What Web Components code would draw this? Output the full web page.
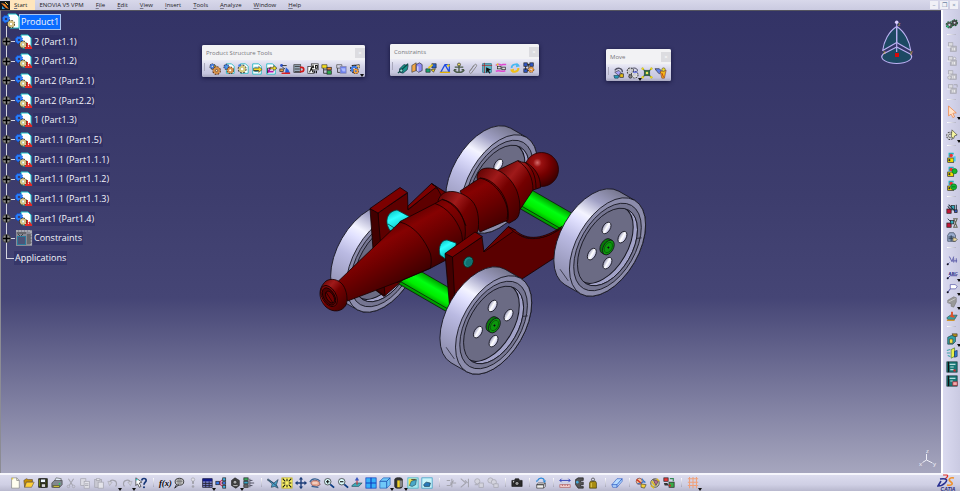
<!DOCTYPE html>
<html lang="en">
<head>
<meta charset="utf-8">
<title>Product1</title>
<style>
html, body { height: 100%; margin: 0; }
body { font-family: "Open Sans", "Noto Sans", sans-serif; overflow: hidden; }
</style>
</head>
<body>
<cad-app></cad-app>
<script>
const gear = (x, y, r, c, s = '#222') =>
  `<circle cx="${x}" cy="${y}" r="${r}" fill="none" stroke="${s}" stroke-width="${r * 0.9}" stroke-dasharray="${r * 0.5} ${r * 0.28}"/><circle cx="${x}" cy="${y}" r="${r * 0.8}" fill="none" stroke="${c}" stroke-width="${r * 0.7}"/>`;
const page = (x, y, w, h, c = '#1cb5c0') =>
  `<path d="M${x} ${y}h${w - 3}l3 3v${h - 3}h-${w}z" fill="#fff" stroke="${c}"/>`;
const ln = (d, c = '#222', w = 1) => `<path d="${d}" fill="none" stroke="${c}" stroke-width="${w}"/>`;
const fl = (d, c, s = 'none') => `<path d="${d}" fill="${c}" stroke="${s}" stroke-width=".7"/>`;
const box = (x, y, w, h, c, s = '#222') => `<rect x="${x}" y="${y}" width="${w}" height="${h}" fill="${c}" stroke="${s}" stroke-width=".8"/>`;
const dot = (x, y, r, c, s = 'none') => `<circle cx="${x}" cy="${y}" r="${r}" fill="${c}" stroke="${s}" stroke-width=".8"/>`;
const grey = '#a3a3ad';
const ghost = extra => box(3, 2, 5, 4, '#dcdce0', grey) + box(5, 6, 7, 6, '#bdbdc4', grey) + ln('M1 7h5M8 8v3M10 8v3', '#f4f4f4') + extra;
const lens = sign => dot(5.5, 5.5, 3.8, '#dff', '#222') + ln('M8.5 8.5l4.5 4', '#0a3a80', 2) + ln(sign, '#111', 1.3);
const trafficBox = extra => box(2, 7, 7, 5, '#f2e000') + dot(4, 9.5, 1.2, '#333') + ln('M4 6V2h5', '#1cb5c0', 2) + dot(6, 4, 2, '#e33') + extra;

const ICONS = {
  comp: gear(4, 4, 2.4, '#3c7be8') + dot(7, 4, 1.4, '#e8d860', '#444') + gear(8.8, 8.8, 3.5, '#d8924a', '#5b2b08') + dot(8.8, 8.8, 1.3, '#f4e8c0', '#5b2b08'),
  prod: page(4, 1, 9, 11) + gear(4, 4.5, 2.4, '#3c7be8') + gear(8.5, 8.5, 3, '#d8924a', '#5b2b08'),
  part: page(4, 1, 9, 11) + gear(6, 7, 3.6, '#d8cc7c', '#444') + dot(3, 3, 1.5, '#3c7be8'),
  exist: page(2, 1, 10, 12) + ln('M4 5h4M4 10h4', '#1cb5c0') + fl('M3 6h6V4l4 3.5L9 11V9H3z', '#f4dc20', '#333') + ln('M3 9h6', '#222'),
  existpos: page(2, 1, 10, 12) + ln('M3 11l4-6M4 10h6', '#b018b0', 2) + fl('M6 5h4V3l4 3-4 3V7H6z', '#f4dc20', '#333') + ln('M3 12V6h3', '#222'),
  replace: dot(3, 3, 1.7, '#2a50c8') + ln('M4 3h5M4 5l3 2', '#222') + box(1, 7, 4, 3, '#f0a648') + fl('M8 5l3 3 2 4H7z', '#2860d8') + ln('M3 12h10', '#d22', 1.6),
  reorder: box(1, 2, 8, 9, '#9ab', '#333') + ln('M2 4h6M2 7h6M2 10h6', '#333') + ln('M8 5h2a2.5 2.5 0 010 5H8', '#d01818', 2),
  number: box(1, 4, 7, 8, '#fff') + box(5, 1, 8, 7, '#fff') + ln('M6 6l1-3 1 3M10 3v3h2V3zM3 11l2-5 2 5M9 9v3M11 9v3', '#111', 1.2),
  load: fl('M1 2h6v4H1z', '#f4dc20', '#333') + ln('M3 6v6h5M3 8h5', '#333') + box(7, 5, 5, 3, '#f0882c') + box(7, 9, 5, 4, '#2fae50'),
  unload: ln('M2 2h6v4H2z', '#666') + ln('M3 6v5h4', '#333') + box(6, 4, 7, 8, '#6d80ea', '#88a') + fl('M7 6h5v4H9z', '#aab8ff'),
  multi: gear(6, 7, 3.4, '#3c7be8') + gear(8, 9.5, 2.4, '#f0a040', '#6b3b10') + ln('M4 3l8-1v4', '#333') + dot(11, 4, 1.4, '#e8c070'),
  coinc: fl('M3 8l5-5 5 1-1 5-5 4-4-1z', '#19948c', '#123') + ln('M1 13L13 2', '#0a4a46', 1.4) + dot(5, 10, 1.8, '#8ee0d0', '#123'),
  contact: fl('M1 4l5-3v9l-5 2z', '#f0a648', '#333') + fl('M6 3l4-2 3 2v7l-4 2-3-2z', '#8e8cf4', '#222') + ln('M8 5v6', '#fff'),
  offset: fl('M1 8h5v4H1z', '#19a06c', '#222') + fl('M8 2h5v5H8z', '#2a62c8', '#222') + ln('M4 7l5-4', '#e8c820', 2) + fl('M7 9l5-1-2 4z', '#f0d020', '#222'),
  angle: ln('M2 12L7 3h5v9zM7 3l5 9', '#1d4ae0', 1.5) + ln('M1 12h12', '#e0b000', 1.5) + dot(11, 4, 1.5, '#e8d020'),
  fix: dot(7, 3, 1.8, '#e8d860', '#333') + ln('M7 4v8M2 6h10M1 9c1 4 11 4 12 0M1 9h3M10 9h3', '#4a5a48', 1.6),
  fixtog: ln('M3 11l6-8c1-1 3 0 2 2l-6 8c-1 1-3-1-2-2l5-7', '#888', 1.1),
  quick: box(2, 2, 10, 10, '#5fb8c8', '#1c6f86') + ln('M1 4h12M4 1v12', '#b02020', .8) + fl('M6 6l6 3-3 1 2 3-1 .7-2-3-2 2z', '#111'),
  flex: ln('M1 4c3-4 5 1 8-1h4M1 11c4-3 6 2 11-1', '#e048d0', 1.8) + box(3, 5, 4, 3, '#ddd') + box(8, 6, 4, 3, '#ddd') + dot(3, 3, 1.2, '#e8d020'),
  change: ln('M3 7c0-5 6-5 8-3', '#48b8f0', 2) + ln('M11 7c0 5-6 5-8 3', '#f0c018', 2.2) + fl('M9 1l4 4-5 1z', '#48b8f0') + fl('M5 13L1 9l5-1z', '#f0c018'),
  reuse: box(1, 1, 4, 4, '#3158c8') + box(8, 1, 4, 4, '#3158c8') + box(1, 8, 4, 4, '#3158c8') + ln('M5 3h3M3 5v4M6 2l2 9M5 10h4', '#222') + gear(9.5, 9, 2.5, '#f0a040', '#6b3b10'),
  manip: ln('M2 4c3-4 9-3 9 2', '#556', 1.6) + fl('M2 6l5-2 4 5-3 2z', '#a8a0f4', '#333') + box(8, 8, 4, 4, '#e8c018') + fl('M1 10h6l-1 3H2z', '#28a0c0', '#134'),
  snap: gear(4, 5, 3, '#ccc') + gear(9, 9, 3, '#ddd') + ln('M5 2c4-2 8 0 7 3', '#334', 1) + dot(4, 11, 2, '#888', '#222') + ln('M7 6h5', '#5060e0', 1.5),
  explode: fl('M4 4h6v6H4z', '#2c7440', '#222') + ln('M1 1l4 4M13 1L9 5M1 13l4-4M13 13L9 9', '#28603c', 1.2) + dot(2, 2, 1.4, '#e8d020') + dot(12, 2, 1.4, '#e8d020') + dot(2, 12, 1.4, '#e8d020') + dot(12, 12, 1.4, '#e8d020') + dot(7, 7, 1.5, '#f0e060'),
  clash: fl('M0 2h5l3 3-3 3-3-3z', '#6080e8', '#222') + fl('M6 5l7-1-1 4-1 5H8z', '#f4b818', '#733') + dot(10, 3, 2, '#e8e030', '#654') + ln('M8 7l2 5', '#c03010'),
  fresh: fl('M3 1h6l3 3v9H3z', '#fffef0', '#777') + ln('M9 1v3h3', '#777', .8) + dot(4, 2, 1, '#e8d040'),
  open: fl('M1 4l3-2 2 1h5v3H4l-2 6z', '#c89000', '#543') + fl('M4 6h9l-3 6H2z', '#ffd038', '#654'),
  save: box(2, 2, 10, 10, '#333a10', '#111') + box(4, 2.4, 6, 4, '#eef8ff', '#111') + box(5, 8, 5, 4, '#d8d8d8', '#111') + ln('M2.8 3v8', '#8c9c18', 1),
  print: fl('M4 5l2-4 6 1-1 4z', '#e8f4ff', '#444') + fl('M1 7l3-3h9v5l-3 3H1z', '#828890', '#333') + fl('M2 10h8v2H3z', '#e8d838', '#333') + dot(10, 8, 1, '#2c6'),
  cut: ln('M4 2l5 8M10 2L5 10', grey, 1.2) + dot(4, 11, 1.5, 'none', grey) + dot(10, 11, 1.5, 'none', grey),
  copy: box(2, 2, 6, 8, '#dcdce4', grey) + box(6, 5, 6, 8, '#e4e4ea', grey) + ln('M7 8h4M7 10h4', grey),
  paste: box(2, 3, 8, 9, '#c8c8d2', grey) + box(4, 2, 4, 2, '#e4e4ea', grey) + box(6, 6, 6, 7, '#e4e4ea', grey),
  undo: ln('M3 7c1-5 9-4 8 2l-1 2', grey, 1.4) + fl('M1 5l2 5 3-4z', '#d4d4dc', grey),
  redo: ln('M11 7c-1-5-9-4-8 2l1 2', grey, 1.4) + fl('M13 5l-2 5-3-4z', '#d4d4dc', grey),
  whats: fl('M1 1l7 5-3 1 2 4-2 1-2-4-2 2z', '#fff', '#111') + ln('M8 4c0-3 5-3 5 0 0 2-2.500 2-2.500 5', '#183878', 2) + dot(10.5, 12, 1.2, '#183878') + dot(2, 3, 1, '#2cc'),
  fx: `<text x="0" y="11" font-family="Liberation Serif, serif" font-style="italic" font-weight="bold" font-size="10">f(x)</text>`,
  url: `<ellipse cx="7.500" cy="5.500" rx="5" ry="4" fill="#ccc" stroke="#222"/>` + ln('M4 9l-2 4 5-4', '#222') + ln('M4 5h7M5 7h5M5 3.500h5', '#444', .8),
  check: ln('M7 2v6', grey, 2.4) + dot(7, 11, 1.5, grey) + dot(7, 3, 2, '#e2e2ea', grey),
  table: box(2, 2, 11, 10, '#7880c8', '#112') + `<rect x="2" y="2" width="11" height="3" fill="#101888"/>` + ln('M2 7.500h11M2 10h11M5.500 5v7M9.500 5v7', '#223', 1),
  relate: ln('M4 7l5-4M4 7h6M4 7l5 4', '#c03060', 1.2) + box(1, 5, 4, 4, '#3878e8') + box(9, 1, 3.500, 3.500, '#40b0e0') + box(9, 5.500, 3.500, 3, '#3878e8') + box(9, 10, 3.500, 3, '#40b0e0'),
  knowledge: fl('M3 4l4-3 5 3v6l-4 3-5-3z', '#444', '#111') + dot(7, 6, 2.300, '#aaa', '#111') + ln('M5 10h5', '#ccc'),
  catalog: box(1, 1, 5, 3, '#38a858') + box(1, 5, 5, 3, '#38a8c8') + box(1, 9, 5, 3, '#666') + ln('M8 2v10M8 4h3M8 7h5M8 10h3', '#445'),
  fly: fl('M0 3l5 2 3 2 5-4-2 6 2 4-4-2-4 1 1-4z', '#48a0c8', '#234') + ln('M1 2l11 9', '#246'),
  fitall: box(1, 1, 12, 12, '#f8f068', '#c0b020') + ln('M2 2l3 3M12 2L9 5M2 12l3-3M12 12L9 9M7 2v3M7 9v3M2 7h3M9 7h3', '#111', 1.2),
  pan: ln('M7 1v12M1 7h12', '#1c3c78', 1.6) + fl('M7 0l2.500 3h-5zM7 14l2.500-3h-5zM0 7l3-2.500v5zM14 7l-3-2.500v5z', '#1c3c78'),
  rotate: fl('M2 7c1-4 8-4 10-1l1 3-4 2-5-1z', '#e8a890', '#634') + ln('M1 6c2-5 9-5 12-1M3 11l8 1', '#346090', 1.4) + ln('M4 7h6', '#fff', 1),
  zoomin: lens('M3.500 5.500h4M5.500 3.500v4'),
  zoomout: lens('M3.500 5.500h4'),
  normal: fl('M1 10l4-3h8l-4 4H1z', '#3cacb8', '#245') + ln('M7 9V2', '#c04040', 1.4) + fl('M7 0l2.500 4h-5z', '#3858c0'),
  multiview: box(1, 1, 12, 12, '#38b0f8', '#113cbc') + ln('M7 1v12M1 7h12', '#113cbc', 1.3),
  iso: fl('M1 5l4-4h8v8l-4 4H1z', '#70c8f8', '#1850b0') + ln('M1 5h8v8M9 5l4-4', '#1850b0', 1),
  shade: fl('M2 3c0-3 9-3 9 0v8c0 3-9 3-9 0z', '#333', '#111') + fl('M5 4h3v8H5z', '#f0d028') + fl('M8 4h3v7l-3 1z', '#888'),
  hide: box(1, 1, 12, 12, '#a8e8f0', '#38b0c0') + fl('M2 2h9L2 11z', '#f0e048') + fl('M3 10l2-5 6-2-1 6-4 2z', '#48a8c8', '#245') + ln('M5 3h5', '#333'),
  swap: box(1, 1, 12, 12, '#c8f4fa', '#2898c0') + fl('M3 9l3-3 5 1-1 4H4z', '#2878b8', '#134'),
  g1: ln('M2 4h4M2 10h4M8 2v10M6 7h7M10 4l-4 6', grey, 1.2),
  g2: ln('M2 2l6 5-6 5M11 2v10M7 4l3 3', grey, 1.2),
  g3: dot(5, 5, 3, '#d4d4de', grey) + box(7, 7, 5, 5, '#d4d4de', grey) + ln('M2 9h4', grey),
  g4: dot(4, 4, 3, '#d4d4de', grey) + dot(8, 6, 3, '#d4d4de', grey) + box(8, 8, 5, 4, '#d4d4de', grey),
  camera: fl('M1 4h3l1-2h4l1 2h3v7H1z', '#2b2b2b', '#111') + dot(7, 7.500, 2.400, '#999', '#000') + dot(3, 5.500, .8, '#ddd'),
  refresh: fl('M2 9h8v4H2zM2 9l2-2h8l-2 2zM12 7v4l-2 2', '#eee', '#222') + ln('M3 4c2-4 7-3 8 0', '#2888d8', 1.5) + fl('M9 4h4l-2 3z', '#2888d8') + fl('M1 4h3L2 6z', '#2888d8'),
  measure: ln('M1 4h12M3 2L1 4l2 2M11 2l2 2-2 2', '#3040b8', 1.1) + box(1, 9, 12, 3, '#f4d0d0', '#b06060') + ln('M4 9v1.500M7 9v1.500M10 9v1.500', '#933', .7),
  caliper: fl('M3 3l3-2h6v3H9v2h3v3H9v2h3v2H6L3 9z', '#555', '#111') + dot(5, 6, 1.500, '#4ad'),
  inertia: fl('M4 5h6l1 2v6H3V7z', '#a88c10', '#332c00') + dot(7, 3, 1.800, 'none', '#333') + ln('M5 7v5', '#e8d060'),
  eraser: fl('M1 9l6-7h6v3l-6 7H2z', '#b8dcff', '#2050c0') + ln('M1 9h6l6-7M7 9v3', '#2050c0', .9),
  render1: dot(5, 5, 3.6, '#f0c8a0', '#733') + ln('M3 8l9-3M8 2l4 5', '#3878c8', 1.3) + ln('M2 3l5 4', '#d83820', 1.8) + fl('M7 8l6 1-2 4-4-1z', '#f4d038', '#333'),
  render2: dot(7, 7, 5, '#c8c8a8', '#333') + fl('M5 3l6 2-3 5z', '#b86890', '#333') + ln('M2 10l4 3M3 5l4 5M9 2l3 3', '#e0b818', 1.600),
  render3: box(1, 1, 5, 4, '#e83838') + box(7, 6, 6, 6, '#38a848') + fl('M1 7h4l2 3H2z', '#333') + ln('M8 2h4v3', '#385', 1.400) + dot(8, 10, 1.3, '#d82020'),
  gridsnap: ln('M1 2h12M1 6h12M1 10h12M3 0v13M7 0v13M11 0v13', '#f0a078', 1.200),
  wb: gear(4, 8, 3, '#555', '#163') + gear(10, 5.500, 2.800, '#444', '#163') + dot(2, 10, 1.300, '#2ec080'),
  gh1: ghost(''), gh2: ghost(dot(10, 4, 1.500, '#eee', grey)), gh3: ghost(dot(4, 10, 2, '#ddd', grey)), gh4: ghost(ln('M9 2h4v3', grey)),
  select: fl('M3 0l9 8-4 .500 2 4-2 1-2-4-3 2z', '#ffe4cc', '#f07020'),
  gearcur: gear(5, 8, 3.300, '#ccc', '#444') + dot(5, 8, 2, '#e8e8f0', '#555') + fl('M7 1l6 6-3 1-1 3-3-2z', '#f4f4a0', '#333'),
  t1: trafficBox(ln('M10 5v6', '#48c8e8', 2.400)),
  t2: trafficBox(dot(10, 6, 3, '#18b828', '#163')),
  t3: trafficBox(dot(9, 8, 3.500, '#18b828', '#163') + ln('M7 8h4', '#063')),
  c1: box(1, 7, 5, 5, '#c01838') + box(6, 3, 4, 5, '#38b0c0') + ln('M3 2l9 9M12 2v9M2 4l3 3', '#234', 1.200) + box(10, 8, 3, 3, '#3858c0'),
  c2: box(1, 7, 5, 5, '#c01838') + box(5, 4, 4, 4, '#38b0c0') + ln('M9 2h4l-2 5 2 5H9l2-5z', '#665', 1.200) + ln('M2 2l4 4', '#234'),
  c3: fl('M2 5l2-3h5l2 3v7H2z', '#9ac', '#234') + ln('M3 7h6M3 9h6M6 5v7', '#234') + fl('M8 8h3l2 2-2 2H8z', '#e8d8a0', '#333'),
  weld: ln('M2 12l2-2M4 3l3 6 2-6M9 8h4M9 5v5M12 5v5', '#5454a4', 1) + dot(2, 12, 1.2, '#112'),
  abc: `<text x="3" y="8" font-family="Liberation Sans, sans-serif" font-weight="bold" font-size="5" fill="#2c2c88">ABC</text>` + ln('M2 12l3-3h8', '#3c3c98', 1) + dot(2, 12, 1.2, '#112'),
  flag: fl('M5 3h6l2 2.500L11 8H5z', '#fff', '#3c3c98') + ln('M5 8l-3 4', '#3c3c98') + dot(2, 12, 1.2, '#112'),
  leaf: fl('M2 5l7-4 3 1v5l-3 6-3-1v-3l-4-1z', '#999', '#777') + ln('M3 7l8-4', '#ccc'),
  stamp: fl('M1 9l4-3h8l-3 5H2z', '#38a0a8', '#244') + ln('M7 8V2M5 7l5 1', '#e05028', 2.200) + ln('M1 12h9', '#d09020', 1.500),
  cube1: fl('M2 5l4-2h5v7l-3 3H2z', '#30a0a8', '#133') + fl('M4 7h4v5H4z', '#f0e048', '#333') + fl('M7 1h6v3H9z', '#b89018', '#333'),
  cube2: fl('M6 3l4-2v10l-4 2z', '#e8f048', '#363') + fl('M10 5l3-1v7l-3 1z', '#3080d8', '#124') + ln('M1 4l4-1M1 7l4 0M2 10l3 1', '#38a0a8', 1.300),
  cat1: box(1, 1, 12, 12, '#187878', '#133') + ln('M4 4h7M5 7h4M5 10h4', '#b8dede', 1.300) + ln('M3 1v12', '#111', 1.500) + dot(10, 11, 1.500, '#c03030'),
  cat2: box(1, 1, 12, 12, '#187878', '#133') + ln('M4 4h7M5 7h3', '#b8dede', 1.300) + ln('M3 1v12', '#111', 1.500) + box(8, 8, 5, 4, '#f0b0b0', '#c02030')
};

const TREE_ICONS = {
  product: `<path d="M6 0h8l3 3v11H8z" fill="#fff" stroke="#22c4cc"/>${gear(4, 5, 2.8, '#2a7cf4', '#0a50e0')}${gear(9, 10, 2.800, '#d8c484', '#443a18')}`,
  part: `<path d="M6 1h7l3 3v10H7z" fill="#fff" stroke="#22c4cc"/><path d="M12 9v5M10 14h7M14 11l2 3" stroke="#e02828" stroke-width="2"/>${gear(4, 6, 2.8, '#2a7cf4', '#0a50e0')}${gear(8, 10.500, 2.700, '#d8c484', '#443a18')}`,
  constraints: `<rect x="1" width="16" height="16" fill="#8a8a96"/><path d="M1 1h15v14" fill="none" stroke="#c4c4cc" stroke-dasharray="2 1"/><path d="M2 3h9M13 4v10M15 4v10M3 4l2 2M8 4l-2 2" fill="none" stroke="#444"/><rect x="2.500" y="6.500" width="8" height="8" fill="#4c5478" stroke="#2c7c9c"/>`
};

function define(name, html, setup) {
  const template = document.createElement('template');
  template.innerHTML = html;
  customElements.define(name, class extends HTMLElement {
    connectedCallback() {
      if (this.shadowRoot) return;
      this.attachShadow({ mode: 'open' }).append(template.content.cloneNode(true));
      if (setup) setup.call(this, this.shadowRoot);
    }
  });
}

define('tool-button', `
<style>
:host { display: block; position: relative; width: 14px; height: 14px; flex: none; }
button { display: block; width: 100%; height: 100%; padding: 1px; border: 0; background: none; }
button:hover { background: #ffe8c0; }
svg { display: block; width: 12px; height: 12px; overflow: visible; }
i { display: none; position: absolute; right: -2px; bottom: -1px; border: 2px solid transparent; border-top: 3px solid #111; border-bottom: 0; }
:host([menu]) i { display: block; }
</style><button type="button"></button><i></i>`, function (root) {
  const b = root.querySelector('button');
  b.setAttribute('aria-label', this.getAttribute('icon'));
  b.innerHTML = `<svg viewBox="0 0 14 14" aria-hidden="true">${ICONS[this.getAttribute('icon')]}</svg>`;
});

define('tool-bar', `
<style>
:host { display: block; }
nav { display: flex; align-items: center; }
hr { flex: none; margin: 0; border: 0; width: 10px; height: 10px; box-sizing: border-box; background: linear-gradient(#fff, #a8a8bc) 5px 0 / 1px 9px no-repeat; }
:host([vertical]) nav { flex-direction: column; }
:host([vertical]) hr { height: 9px; background: linear-gradient(90deg, #fff, #b4b4c8) 0 3px / 9px 1px no-repeat; }
</style><nav></nav>`, function (root) {
  const nav = root.querySelector('nav');
  for (const item of this.getAttribute('items').split(' ')) {
    if (item === '|') { nav.append(document.createElement('hr')); continue; }
    const b = document.createElement('tool-button');
    b.setAttribute('icon', item.replace('+', ''));
    if (item.endsWith('+')) b.setAttribute('menu', '');
    nav.append(b);
  }
});

define('tool-window', `
<style>
:host { position: absolute; border-radius: 2px; overflow: hidden; background: #d4d4e8; box-shadow: 0 1px 4px #15153a; }
header { display: flex; align-items: center; justify-content: space-between; height: 15px; padding: 0 0 0 4px; background: #f2f2f4; color: #77777c; font-size: 6px; line-height: 14px; }
button { width: 10px; height: 10px; padding: 0; border: 0; background: #dcdce0; color: #fff; font: 6px/10px "Open Sans", sans-serif; }
section { display: flex; height: 17px; align-items: center; padding: 0 3px 0 6px; background: linear-gradient(#ececf6, #d2d2e8 40%, #c6c6de 80%, #a8a8c0); position: relative; }
section::before { content: ""; position: absolute; left: 2px; top: 3px; width: 1px; height: 8px; background: #aaaabc; }
</style><header><span></span><button type="button" aria-label="Close">×</button></header><section><slot></slot></section>`, function (root) {
  root.querySelector('span').textContent = this.getAttribute('heading');
});

define('menu-bar', `
<style>
:host { display: flex; align-items: center; justify-content: space-between; height: 10px; background: linear-gradient(#d8d8ea, #cacae0); color: #1c1c24; font-size: 6px; line-height: 10px; }
nav { display: flex; align-items: center; }
.app { width: 10px; height: 9px; display: block; }
button { border: 0; margin: 0; padding: 0 6px; background: none; font: inherit; color: inherit; line-height: 10px; white-space: nowrap; }
button.on { background: #ffe6bd; padding: 0 8px 0 4px; }
button.enovia { padding-left: 4px; }
u { text-underline-offset: 1px; text-decoration-thickness: 1px; text-decoration-color: #77778a; }
.win { gap: 2px; padding-right: 2px; }
.win button { width: 8px; padding: 0; background: #f0f0f6; color: #6c84a4; line-height: 8px; height: 8px; }
</style>
<nav aria-label="Menu"><svg class="app" viewBox="0 0 10 9"><path fill="#101820" d="M0 0h10v9H0z"/><path d="M1 2l4 1 4 5-3-1z" fill="#f08028"/><path d="M2 5l3 3H2z" fill="#38a0e0"/><path d="M5 1l3 3" stroke="#f8d040"/></svg>
<button class="on"><u>S</u>tart</button><button class="enovia">ENOVIA V5 VPM</button><button><u>F</u>ile</button><button><u>E</u>dit</button><button><u>V</u>iew</button><button><u>I</u>nsert</button><button><u>T</u>ools</button><button><u>A</u>nalyze</button><button><u>W</u>indow</button><button><u>H</u>elp</button></nav>
<nav class="win"><button aria-label="Minimize">–</button><button aria-label="Restore">❐</button><button aria-label="Close">×</button></nav>`);

define('tree-node', `
<style>
:host { display: flex; align-items: center; position: relative; padding-left: 1px; color: #f4f4fa; font-size: 9px; line-height: 14px; white-space: nowrap; }
:host::before { content: ""; position: absolute; left: 5px; top: 0; bottom: 0; width: 1px; background: #d4d4de; }
:host([kind=product])::before { top: 14px; }
:host([kind=none])::before { bottom: 50%; }
.arm { width: 4px; height: 1px; background: #d4d4de; }
:host([kind=none]) .arm { margin-left: 4px; width: 8px; }
button { position: relative; width: 9px; height: 9px; padding: 0; border: 0; background: none; }
button svg { display: block; width: 9px; height: 9px; }
.icon { width: 17px; height: 16px; overflow: visible; margin-right: 1px; flex: none; position: relative; }
:host([kind=product]) button, :host([kind=product]) .arm, :host([kind=none]) button, :host([kind=none]) .icon { display: none; }
span { padding: 0 1px; background: #2a2a6080; }
:host([kind=product]) span { background: #0a6cff; outline: 1px solid #a8c4f0; }
</style><button type="button" aria-label="Expand"><svg viewBox="0 0 9 9"><circle cx="4.500" cy="4.500" r="4" fill="#8c8c8c" stroke="#444"/><path d="M4.500 1v7M1 4.500h7" stroke="#000" stroke-width="1.500"/></svg></button><i class="arm"></i><svg class="icon" viewBox="0 0 17 16"></svg><span><slot></slot></span>`, function (root) {
  root.querySelector('.icon').innerHTML = TREE_ICONS[this.getAttribute('kind')] || '';
});

define('spec-tree', `
<style>
:host { position: absolute; left: 0; top: 1px; display: grid; grid-auto-rows: 1fr; height: 256px; }
</style><slot></slot>`);

/* A wheel is drawn in its own frame: x runs along the axle, y across it. */
const wheel = (x, y, hub = true) => `
<g transform="translate(${x} ${y}) rotate(30)" stroke="#15151f" stroke-width=".8">
 <path d="M0-54H-18A31 54 0 0 0-18 54H0A31 54 0 0 0 0-54z" fill="url(#tire)"/>
 <ellipse rx="31" ry="54" fill="#8c8cab"/>
 <ellipse rx="27.500" ry="48" fill="#757591"/>
 <g clip-path="url(#rim)"><ellipse rx="24.500" ry="42.500" fill="#a2a2c8"/><ellipse cx="-5" rx="24.500" ry="42.500" fill="#6b6b84" stroke-width="1"/></g>
 <ellipse rx="24.500" ry="42.500" fill="none"/>
 <path d="M-30 43l13 6M21 -22l4 -3" fill="none" stroke-width=".6"/>
 ${[[-10.400, -16], [8, -16], [-10, 14], [8, 14]].map(([a, b]) => `<ellipse cx="${a}" cy="${b}" rx="3.700" ry="6.300" fill="url(#hole)"/>`).join('')}
 ${hub ? '<path d="M1-8h-3a5 8 0 0 0 0 16h3z" fill="#087808"/><ellipse cx="1" rx="5" ry="8" fill="#0c960c"/><ellipse cx="1" rx="3.500" ry="5.600" fill="none" stroke="#064806" stroke-width=".6"/><circle cx="1" r=".7" fill="#000"/>' : ''}
</g>`;

define('cannon-model', `
<style>
:host { position: absolute; left: 309px; top: 109px; width: 340px; height: 270px; }
svg { display: block; width: 100%; height: 100%; }
</style>
<svg viewBox="310 120 340 270" role="img" aria-label="Cannon assembly">
<defs>
 <linearGradient id="tire" gradientUnits="userSpaceOnUse" x1="0" y1="-54" x2="0" y2="54"><stop offset="0" stop-color="#77778f"/><stop offset=".18" stop-color="#a0a0c4"/><stop offset=".34" stop-color="#f4f4ff"/><stop offset=".42" stop-color="#e2e2ff"/><stop offset=".6" stop-color="#babae2"/><stop offset="1" stop-color="#8888a8"/></linearGradient>
 <linearGradient id="hole"><stop offset="0" stop-color="#9898ba"/><stop offset=".5" stop-color="#fff"/><stop offset="1" stop-color="#c4c4ea"/></linearGradient>
 <clipPath id="rim"><ellipse rx="24.500" ry="42.500"/></clipPath>
 <linearGradient id="axle" gradientUnits="userSpaceOnUse" x1="0" y1="-11" x2="0" y2="11"><stop offset="0" stop-color="#00a000"/><stop offset=".35" stop-color="#00ff10"/><stop offset=".65" stop-color="#00ee00"/><stop offset="1" stop-color="#008a00"/></linearGradient>
 <linearGradient id="barrel" gradientUnits="userSpaceOnUse" x1="408" y1="212" x2="440" y2="268"><stop offset="0" stop-color="#5c0000"/><stop offset=".22" stop-color="#860202"/><stop offset=".5" stop-color="#6c0000"/><stop offset="1" stop-color="#380000"/></linearGradient>
 <linearGradient id="ring" x1="0" y1="0" x2="1" y2="1"><stop offset="0" stop-color="#560000"/><stop offset=".3" stop-color="#a01a1a"/><stop offset=".5" stop-color="#740000"/><stop offset="1" stop-color="#3c0000"/></linearGradient>
 <radialGradient id="ball" cx=".38" cy=".3" r=".7"><stop offset="0" stop-color="#d46a6a"/><stop offset=".18" stop-color="#981010"/><stop offset=".55" stop-color="#740000"/><stop offset="1" stop-color="#3c0000"/></radialGradient>
 <linearGradient id="peg" x1="0" y1="0" x2=".5" y2="1"><stop offset="0" stop-color="#00b8b8"/><stop offset=".4" stop-color="#30ffff"/><stop offset="1" stop-color="#00b0b0"/></linearGradient>
</defs>
${wheel(384.300, 263, false)}${wheel(499.300, 184, false)}
<g stroke="#0a1a0a" stroke-width=".7">
 <g transform="translate(499.300 184) rotate(30)"><path d="M20-11H100V11H20z" fill="url(#axle)"/><path d="M20 8H100" /></g>
 <g transform="translate(384.300 263) rotate(30)"><path d="M-2-11H90V11H-2z" fill="url(#axle)"/><path d="M0 8H90"/></g>
</g>
<g stroke="#100" stroke-width=".8" stroke-linejoin="round">
 <path d="M378 213l29.500-20 .5 17 27-22.500 13 7 0 40-50 50-14 12-8-6z" fill="#5e0000"/>
 <path d="M370 208.500l8 4.500 7 83-9-6z" fill="#420000"/>
 <path d="M370 208.500l30-21 7.500 5-29.500 20.500z" fill="#7c0000"/>
 <path d="M408 206l23.500-22.500 5 3.500-28.500 22.500z" fill="#7c0000"/>
 <path d="M431.500 183.500l16 10-5 4-6-10.500z" fill="#6c0000"/>
 <path d="M397 210l14 7.500-3 16-18-3c-6-9-3-19 7-20.500z" fill="url(#peg)" stroke="#044"/>
 <path d="M388 224l8 5" stroke="#044"/>
 <circle cx="541.500" cy="169.500" r="17" fill="url(#ball)" stroke="#200"/>
 <path d="M498 170l20-9.500 3.500 1.500 4 .5c10 5 15 14 15 25l-7.500 2.500-12 18-6 7-14-5z" fill="url(#ring)"/>
 <path d="M518 161c10 6 15 17 15 29M525 162.500c7 5 11 13 11 26" fill="none"/>
 <path d="M477 178c0-5 3-9 8-9.700 12-2 26 8 32 23 4 11 4 24-1 28l-7 4-18-12z" fill="url(#ring)"/>
 <path d="M460 191l20-13c14 0 31 20 28 42l-28 12z" fill="url(#barrel)"/>
 <path d="M480 178c13 3 22 15 26 26 2 6 2 11 1 15" fill="none"/>
 <path d="M438 201c2-7 7-10 15-9.500 9 1 17 6 21 12 5 8 5 19 4 28l-22 20z" fill="url(#ring)"/>
 <path d="M400 221.500l35-18 7-4c12 2 20 12 23 26 1 8 0 14-2 22l-16 12-17 9-33 14-20-20z" fill="url(#barrel)"/>
 <path d="M338 281.500l62-59.500c15 4 25 18 30.500 32 1 5 1 9 0 14l-33 14-50 19z" fill="url(#barrel)"/>
 <path d="M435 203.500c12 4 21 15 26 28 2 8 2 14 0 20M442 199c13 5 20 15 24 27" fill="none"/>
 <path d="M326 281c5-3 12-2 17 4 4 6 5 15 3 20-4 7-13 8-20 2-7-7-9-18 0-26z" fill="url(#ring)"/>
 <ellipse cx="329" cy="296" rx="7" ry="11.500" transform="rotate(-30 329 296)" fill="#7c0808"/>
 <ellipse cx="329" cy="296.500" rx="5.500" ry="9.500" transform="rotate(-30 329 296.500)" fill="#4c0000"/>
 <ellipse cx="330" cy="297" rx="3.600" ry="6.500" transform="rotate(-30 330 297)" fill="#6e0000"/>
 <path d="M326 292l7 11" fill="none"/>
 <path d="M447 240l9 3v12l-9 5-7-5c-2-8 1-15 7-15z" fill="url(#peg)" stroke="#044"/>
 <path d="M452 257l30-20 2 15 24.500-25 8 5c8 10 27 9 47-5v25l-40 26-70 30z" fill="#5a0000"/>
 <path d="M445 253.500l7.500 3.500 2 38-5 10z" fill="#420000"/>
 <path d="M445 253.500l30-21.500 7.500 4.500-30 20.500z" fill="#780000"/>
 <path d="M483.500 251.500l24.800-25 7 3.500-30 21z" fill="#6c0000"/>
 <path d="M508.300 226.700l7 3.500c12 11 28 9 47-4-16 15-38 17-54 .5z" fill="#7c0000"/>
 <ellipse cx="468.300" cy="262" rx="4.500" ry="5.500" transform="rotate(30 468.300 262)" fill="#1c8c8c" stroke="#032"/>
 <ellipse cx="469" cy="262.300" rx="3" ry="4" transform="rotate(30 469 262.300)" fill="#107070" stroke="none"/>
</g>
${wheel(607.500, 247)}${wheel(493.600, 325)}
</svg>`);

define('view-compass', `
<style>
:host { position: absolute; right: 27px; top: 7px; width: 34px; height: 48px; }
svg { display: block; }
text { font: 5px "Open Sans", sans-serif; fill: #d8b830; }
</style>
<svg width="34" height="48" viewBox="880 18 34 48" role="img" aria-label="Compass">
<g stroke="#bdb2f4" stroke-width="1.100" fill="#1d4963" stroke-linejoin="round">
<path d="M896.700 26.500c-8 5-13 15-14 24l14-8z"/><path d="M896.700 26.500c8 5 13 15 14 24l-14-8z"/>
<path d="M896.700 47l-13.500 7c-5 5 4 9.500 13.500 9.500s18.500-4.500 13.500-9.500z"/>
<path d="M896.700 22v30" fill="none"/></g>
<circle cx="896.700" cy="22.300" r="1.800" fill="#ddd0ff"/><path d="M895 53h4v4h-4z" fill="#d80808"/>
<text x="898" y="26">z</text><text x="883" y="54">x</text><text x="910" y="54">y</text></svg>`);

define('axis-triad', `
<style>
:host { position: absolute; right: 3px; bottom: 3px; width: 20px; height: 24px; }
svg { display: block; }
text { font: 6px "Open Sans", sans-serif; fill: #f4f4fa; }
</style>
<svg width="20" height="24" viewBox="918 446 20 24" role="img" aria-label="Axes"><path d="M926.500 454v6l-4 2.500M926.500 460l6 3" fill="none" stroke="#f0f0f8"/><text x="926" y="453">z</text><text x="919" y="466">x</text><text x="933" y="466">y</text></svg>`);

define('brand-mark', `
<style>
:host { display: flex; flex-direction: column; align-items: center; width: 22px; height: 18px; }
svg { display: block; width: 22px; height: 13px; }
span { font: italic bold 5px/5px "Liberation Sans", sans-serif; color: #28287c; }
</style>
<svg viewBox="0 0 22 13" aria-hidden="true"><path d="M6 1h4c2 1-1 3-2 4" fill="none" stroke="#e03028" stroke-width="1.200"/><path d="M3 5c7-1 8 1 5 4-2 2-5 3-7 3l3-5" fill="none" stroke="#283090" stroke-width="1.600"/><path d="M17 4c-5-1-6 2-3 4s0 4-4 3" fill="none" stroke="#f09028" stroke-width="1.600"/></svg><span>CATIA</span>`);

define('cad-app', `
<style>
:host { display: grid; grid-template: auto 1fr 18px / 1fr 19px; height: 100vh; overflow: hidden; background: #d0d0e6; }
menu-bar { grid-column: 1 / -1; }
main { position: relative; overflow: hidden; border-top: 1px solid #55555f; border-left: 1px solid #8c8c94; background: linear-gradient(#333366, #3d3d6d 40%, #454575 62%, #6e6e94 78%, #a6a6be); }
aside { border-left: 2px solid #fff; background: linear-gradient(90deg, #dadaf0, #cacae2); padding: 7px 0 0 1px; }
footer { display: flex; align-items: center; padding-left: 8px; border-top: 2px solid #f6f6fc; background: linear-gradient(#dcdcee, #cfcfe4 60%, #b8b8ce); grid-column: 1 / -1; grid-row: 3; box-sizing: border-box; }
footer brand-mark { margin-left: auto; margin-right: 1px; }
.structure { left: 201px; top: 34px; }
.constraints { left: 389px; top: 33px; }
.move { left: 605px; top: 38px; }
</style>
<menu-bar></menu-bar>
<main>
<spec-tree>
<tree-node kind="product">Product1</tree-node>
<tree-node kind="part">2 (Part1.1)</tree-node>
<tree-node kind="part">2 (Part1.2)</tree-node>
<tree-node kind="part">Part2 (Part2.1)</tree-node>
<tree-node kind="part">Part2 (Part2.2)</tree-node>
<tree-node kind="part">1 (Part1.3)</tree-node>
<tree-node kind="part">Part1.1 (Part1.5)</tree-node>
<tree-node kind="part">Part1.1 (Part1.1.1)</tree-node>
<tree-node kind="part">Part1.1 (Part1.1.2)</tree-node>
<tree-node kind="part">Part1.1 (Part1.1.3)</tree-node>
<tree-node kind="part">Part1 (Part1.4)</tree-node>
<tree-node kind="constraints">Constraints</tree-node>
<tree-node kind="none">Applications</tree-node>
</spec-tree>
<cannon-model></cannon-model>
<view-compass></view-compass>
<axis-triad></axis-triad>
<tool-window class="structure" heading="Product Structure Tools"><tool-bar items="comp prod part exist existpos replace reorder number load unload multi+"></tool-bar></tool-window>
<tool-window class="constraints" heading="Constraints"><tool-bar items="coinc contact offset angle fix fixtog quick flex change reuse"></tool-bar></tool-window>
<tool-window class="move" heading="Move"><tool-bar items="manip snap+ explode clash"></tool-bar></tool-window>
</main>
<aside><tool-bar vertical items="wb | gh1 gh2 gh3 gh4 | select+ | gearcur+ | t1 t2 t3 | c1 c2 c3 | weld abc+ flag+ leaf+ stamp | cube1+ cube2 cat1 cat2"></tool-bar></aside>
<footer><tool-bar items="fresh open save print cut copy paste undo+ redo+ whats | fx url check table+ relate knowledge+ catalog | fly fitall pan rotate zoomin zoomout normal multiview iso+ shade+ hide swap | g1 g2 g3 g4 | camera | refresh | measure caliper inertia | eraser | render1 render2 render3 | gridsnap+"></tool-bar><brand-mark></brand-mark></footer>
`);
</script>
</body>
</html>
